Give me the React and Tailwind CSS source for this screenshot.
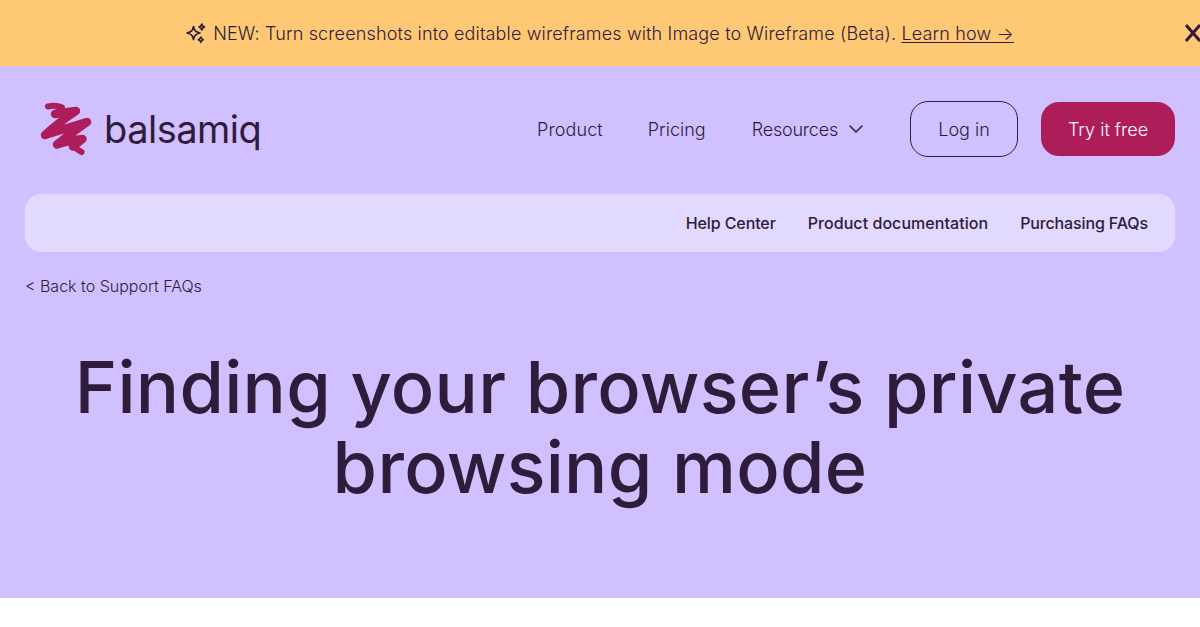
import React from 'react';
import { ChevronDown } from 'lucide-react';

const Logo = () => (
  <svg width="65" height="62" viewBox="0 0 65 62" className="shrink-0" fill="none" stroke="#ad1d5a" strokeLinecap="round" strokeLinejoin="round">
    <path strokeWidth="6" d="M13 8.5 Q21 6.5 27 9.5 L20 16" />
    <path strokeWidth="8.5" d="M20 16 Q32 14 41 13 Q24 24 10 37 Q32 30 52 24 Q36 35 22 46.5 Q36 42 47.5 41 L38 48.5" />
    <path strokeWidth="6" d="M38 48.5 L46.5 54" />
  </svg>
);

const Sparkles = () => (
  <svg width="21" height="21" viewBox="0 0 21 21" fill="none" stroke="#2f1b3a" strokeWidth="1.6" strokeLinejoin="round" className="shrink-0">
    <path d="M7.5 3.5 C8.3 7.5 9.5 9 14 10 C9.5 11 8.3 12.5 7.5 16.5 C6.7 12.5 5.5 11 1 10 C5.5 9 6.7 7.5 7.5 3.5Z" />
    <path d="M15.8 1 C16.1 2.8 16.6 3.4 18.6 4 C16.6 4.6 16.1 5.2 15.8 7 C15.5 5.2 15 4.6 13 4 C15 3.4 15.5 2.8 15.8 1Z" />
    <path d="M14.8 14 C15.1 15.6 15.6 16.2 17.3 16.7 C15.6 17.2 15.1 17.8 14.8 19.4 C14.5 17.8 14 17.2 12.3 16.7 C14 16.2 14.5 15.6 14.8 14Z" />
  </svg>
);

const App = () => (
  <div className="min-h-[627px] overflow-hidden bg-white font-['Inter',sans-serif] text-[#2f1b3a]">
    <div className="relative flex h-[66px] items-center justify-center gap-[6px] overflow-hidden bg-[#ffc875] text-[18px] font-light tracking-[0.15px]">
      <Sparkles />
      <span>
        NEW: Turn screenshots into editable wireframes with Image to Wireframe (Beta).{' '}
        <u className="underline-offset-2">Learn how →</u>
      </span>
      <svg width="16" height="18" viewBox="0 0 16 18" fill="none" stroke="#2f1b3a" strokeWidth="3" className="absolute left-[1185px] top-[24px]">
        <path d="M1 1 L15 17 M15 1 L1 17" />
      </svg>
    </div>
    <div className="h-[532px] bg-[#d0c0ff] px-[25px]">
      <header className="mb-[2px] flex h-[126px] items-center justify-between">
        <div className="flex items-center gap-[4px] pl-[10px]">
          <Logo />
          <span className="text-[38px] leading-none tracking-[-0.5px]">balsamiq</span>
        </div>
        <nav className="flex items-center text-[18px] font-light">
          <span className="tracking-[0.1px]">Product</span>
          <span className="ml-[45px]">Pricing</span>
          <span className="ml-[46px] tracking-[-0.2px]">Resources</span>
          <ChevronDown className="ml-[6px] h-6 w-6" strokeWidth={1.5} />
          <span className="ml-[42px] flex h-[56px] w-[108px] items-center justify-center rounded-[18px] border border-[#2f1b3a]">Log in</span>
          <span className="ml-[23px] flex h-[54px] w-[134px] items-center justify-center rounded-[18px] bg-[#ad1d5a] text-white">Try it free</span>
        </nav>
      </header>
      <div className="flex h-[58px] items-center justify-end gap-8 rounded-2xl bg-[#e2d9ff] px-[27px] text-[16px] font-medium">
        <span className="tracking-[-0.1px]">Help Center</span>
        <span className="tracking-[0.05px]">Product documentation</span>
        <span className="tracking-[-0.13px]">Purchasing FAQs</span>
      </div>
      <p className="mt-[22px] text-[16px] font-light">&lt; Back to Support FAQs</p>
      <h1 className="mt-[49px] text-center text-[72px] font-medium leading-[80px] tracking-[0.27px]">Finding your browser’s private browsing mode</h1>
    </div>
  </div>
);

export default App;
